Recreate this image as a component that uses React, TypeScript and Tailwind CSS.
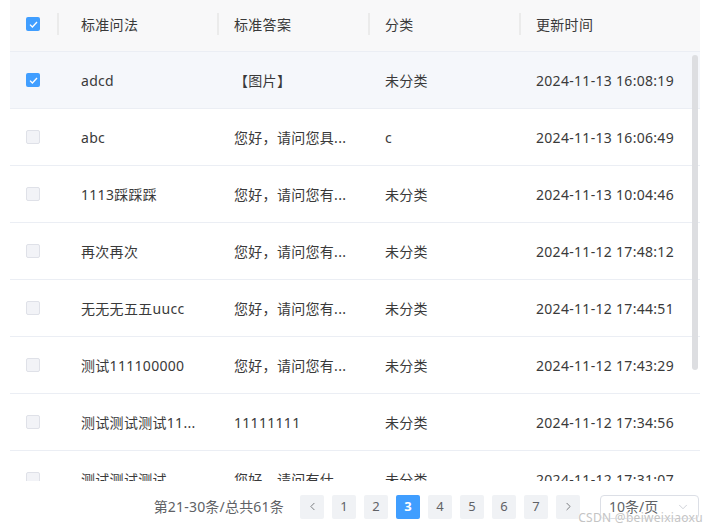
import { ChevronDown, ChevronLeft, ChevronRight } from "lucide-react";

interface Row {
  question: string;
  answer: string;
  category: string;
  updatedAt: string;
  checked?: boolean;
}

const rows: Row[] = [
  { question: "adcd", answer: "【图片】", category: "未分类", updatedAt: "2024-11-13 16:08:19", checked: true },
  { question: "abc", answer: "您好，请问您具...", category: "c", updatedAt: "2024-11-13 16:06:49" },
  { question: "1113踩踩踩", answer: "您好，请问您有...", category: "未分类", updatedAt: "2024-11-13 10:04:46" },
  { question: "再次再次", answer: "您好，请问您有...", category: "未分类", updatedAt: "2024-11-12 17:48:12" },
  { question: "无无无五五uucc", answer: "您好，请问您有...", category: "未分类", updatedAt: "2024-11-12 17:44:51" },
  { question: "测试111100000", answer: "您好，请问您有...", category: "未分类", updatedAt: "2024-11-12 17:43:29" },
  { question: "测试测试测试11...", answer: "11111111", category: "未分类", updatedAt: "2024-11-12 17:34:56" },
  { question: "测试测试测试", answer: "您好，请问有什", category: "未分类", updatedAt: "2024-11-12 17:31:07" },
];

const cols = "grid grid-cols-[47px_160px_151px_151px_1fr]";

function Checkbox({ checked }: { checked?: boolean }) {
  if (checked) {
    return (
      <span className="flex h-[14px] w-[14px] items-center justify-center rounded-[2px] bg-[#409eff]">
        <svg width="9" height="7" viewBox="0 0 9 7" fill="none">
          <path d="M1 3.6 3.4 6 8 1" stroke="#fff" strokeWidth="1.3" />
        </svg>
      </span>
    );
  }
  return <span className="block h-[14px] w-[14px] rounded-[2px] border border-[#dfe1e8] bg-[#f2f3f7]" />;
}

function HeadCell({ label, first }: { label: string; first?: boolean }) {
  return (
    <div className="relative flex items-center pb-[3px]">
      <span className="absolute left-0 top-[13px] h-[22px] w-[2px] bg-[#ebebeb]" />
      <span className={first ? "pl-[24px]" : "pl-[17px]"}>{label}</span>
    </div>
  );
}

export default function App() {
  return (
    <div
      className="relative h-[532px] w-[720px] overflow-hidden bg-white text-[14px] tracking-[0.3px] text-[#3a3a3a]"
      style={{ fontFamily: '"Noto Sans", "Noto Sans CJK SC", sans-serif' }}
    >
      <div className="ml-[10px] w-[690px]">
        <div className={`${cols} h-[52px] border-b border-[#ebeef4] bg-[#f8f8f9]`}>
          <div className="flex items-center pb-[3px] pl-[16px]">
            <Checkbox checked />
          </div>
          <HeadCell label="标准问法" first />
          <HeadCell label="标准答案" />
          <HeadCell label="分类" />
          <HeadCell label="更新时间" />
        </div>

        <div className="relative h-[429px] overflow-hidden">
          {rows.map((r) => (
            <div
              key={r.updatedAt}
              className={`${cols} h-[57px] border-b border-[#ebeef4] ${r.checked ? "bg-[#f5f7fb]" : "bg-white"}`}
            >
              <div className="flex items-center pl-[16px]">
                <Checkbox checked={r.checked} />
              </div>
              <div className="flex items-center whitespace-nowrap pl-[24px]">{r.question}</div>
              <div className="flex items-center whitespace-nowrap pl-[17px]">{r.answer}</div>
              <div className="flex items-center pl-[17px]">{r.category}</div>
              <div className="flex items-center whitespace-nowrap pl-[17px]">{r.updatedAt}</div>
            </div>
          ))}
          <div className="absolute right-[2px] top-[3px] h-[315px] w-[6px] rounded-full bg-[#dddee1]" />
        </div>

        <div className="flex h-[51px] items-center justify-end gap-[8px] pr-[1px] tracking-normal text-[#606266]">
          <span className="mr-[8px] text-[14px] tracking-[0.2px]">第21-30条/总共61条</span>
          <button className="flex h-[24px] w-[24px] items-center justify-center rounded-[2px] bg-[#f0f2f5]">
            <ChevronLeft size={13} strokeWidth={1.5} color="#606266" />
          </button>
          {[1, 2, 3, 4, 5, 6, 7].map((n) => (
            <button
              key={n}
              className={
                n === 3
                  ? "flex h-[24px] w-[24px] items-center justify-center rounded-[2px] bg-[#409eff] text-[13px] font-bold text-white"
                  : "flex h-[24px] w-[24px] items-center justify-center rounded-[2px] bg-[#f0f2f5] text-[13px] text-[#606266]"
              }
            >
              {n}
            </button>
          ))}
          <button className="flex h-[24px] w-[24px] items-center justify-center rounded-[2px] bg-[#f0f2f5]">
            <ChevronRight size={13} strokeWidth={1.5} color="#606266" />
          </button>
          <div className="ml-[12px] flex h-[24px] w-[99px] items-center justify-between rounded-[4px] border border-[#dcdfe6] pl-[8px] pr-[8px] text-[14px]">
            <span>10条/页</span>
            <ChevronDown size={14} strokeWidth={1.3} color="#c0c4cc" />
          </div>
        </div>
      </div>

      <span
        className="absolute bottom-[8px] right-[17px] text-[12px] leading-none text-[#c4c4c4]"
        style={{ textShadow: "0 0 1px #fff, 0 0 1px #fff" }}
      >
        CSDN @beiweixiaoxu
      </span>
    </div>
  );
}
